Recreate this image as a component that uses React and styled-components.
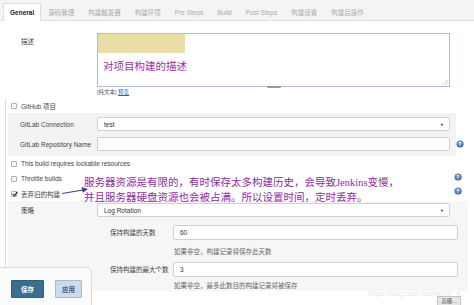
import React from 'react';
import styled, { createGlobalStyle, css } from 'styled-components';

const Global = createGlobalStyle`
  html, body { margin: 0; padding: 0; background: #fff; }
  body {
    font-family: "Liberation Sans", Arial, "Noto Sans CJK SC", sans-serif;
    font-size: 6.5px;
    color: #444;
  }
  * { box-sizing: border-box; }
`;

const Page = styled.div`
  position: relative;
  width: 474px;
  height: 305px;
  overflow: hidden;
  background: #fff;
`;

const TabBar = styled.div`
  display: flex;
  align-items: flex-end;
  height: 21px;
  padding-left: 3px;
  background: #f4f4f4;
  border-bottom: 1px solid #e0e0e0;
`;

const Tab = styled.div`
  height: 18px;
  line-height: 17px;
  padding: 0 6px;
  margin-bottom: -1px;
  white-space: nowrap;
  color: #ababab;
  border: 1px solid transparent;
  border-bottom: none;
  ${p => p.$active && css`
    background: #fff;
    color: #222;
    font-weight: bold;
    border-color: #dedede;
  `}
`;

const DescRow = styled.div`
  display: flex;
  padding: 12px 0 0 21px;
`;

const Label = styled.div`
  flex: 0 0 ${p => p.$w}px;
  line-height: 9px;
  white-space: nowrap;
  color: #444;
  ${p => p.$top && css`padding-top: 4px;`}
`;

const Control = styled.div`
  display: flex;
  flex-direction: column;
`;

const TextArea = styled.div`
  position: relative;
  width: 353px;
  height: 54px;
  border: 1px solid #a9bfdc;
  background: #fff;
`;

const Highlight = styled.div`
  width: 87px;
  height: 19px;
  background: #eadda8;
`;

const DescText = styled.div`
  margin-top: 7px;
  padding-left: 5px;
  line-height: 14px;
  font-size: 10.5px;
  color: #9b2fa0;
  font-family: "KaiTi", "Liberation Serif", "Noto Sans CJK SC", serif;
`;

const Grip = styled.div`
  position: absolute;
  left: 169px;
  bottom: -2px;
  width: 14px;
  height: 2px;
  background: #9a9a9a;
  border-radius: 1px;
`;

const Corner = styled.svg`
  position: absolute;
  right: 1px;
  bottom: 1px;
`;

const PreviewLine = styled.div`
  margin-top: 1px;
  font-size: 5.5px;
  line-height: 8px;
  color: #555;
  a { color: #2a5db0; text-decoration: underline; }
`;

const Section = styled.div`
  position: relative;
  margin: 3px 0 0 5px;
  border-left: 1px solid #dcdcdc;
  padding-bottom: 40px;
`;

const CheckRow = styled.div`
  display: flex;
  align-items: center;
  height: ${p => p.$h}px;
  padding: 0 12px 0 5px;
`;

const Box = styled.span`
  flex: 0 0 6px;
  height: 6px;
  margin-right: 4px;
  border: 1px solid #b0b0b0;
  border-radius: 1px;
  background: #f6f6f6;
  position: relative;
`;

const SubBlock = styled.div`
  margin-left: 2px;
  width: ${p => p.$w}px;
  background: ${p => p.$bg};
  padding: ${p => p.$pad};
`;

const FieldRow = styled.div`
  display: flex;
  align-items: center;
  margin-top: ${p => p.$mt || 0}px;
  padding-left: ${p => p.$pl || 0}px;
`;

const Select = styled.div`
  flex: 0 0 ${p => p.$w}px;
  height: ${p => p.$h || 14}px;
  display: flex;
  align-items: center;
  justify-content: space-between;
  padding: 0 5px 0 6px;
  background: #fff;
  border: 1px solid #d0d0d0;
  border-radius: 2px;
  color: #333;
`;

const Caret = styled.span`
  font-size: 4px;
  color: #222;
`;

const Hint = styled.div`
  margin-top: ${p => p.$mt}px;
  padding-left: 166px;
  line-height: 10px;
  color: #666;
  white-space: nowrap;
`;

const HelpIcon = styled.svg`
  flex: 0 0 8px;
  margin-left: ${p => p.$ml || 0}px;
`;

const Annotation = styled.div`
  position: absolute;
  left: 78px;
  top: 76px;
  font-family: "KaiTi", "Liberation Serif", "Noto Sans CJK SC", serif;
  font-size: 10.5px;
  line-height: 15px;
  color: #8e2c9c;
  white-space: nowrap;
  pointer-events: none;
`;

const Arrow = styled.svg`
  position: absolute;
  left: 55px;
  top: 86px;
`;

const SaveBar = styled.div`
  position: absolute;
  left: 0;
  bottom: 0;
  width: 92px;
  height: 38px;
  display: flex;
  gap: 11px;
  padding: 12px 0 0 11px;
  background: #fbfbfb;
  border-top: 1px solid #dcdcdc;
  border-right: 1px solid #dcdcdc;
  border-top-right-radius: 6px;
`;

const Button = styled.div`
  width: ${p => p.$w}px;
  height: 18px;
  display: flex;
  align-items: center;
  justify-content: center;
  font-size: 6.5px;
  font-weight: bold;
  border-radius: 1px;
  ${p => p.$primary ? css`
    background: #3c6e8d;
    color: #fff;
    border: 1px solid #2f5d7a;
  ` : css`
    background: #cbdbec;
    color: #3a5d80;
    border: 1px solid #a3bcd6;
  `}
`;

const Advanced = styled.div`
  position: absolute;
  right: 13px;
  bottom: 0;
  width: 24px;
  height: 9px;
  display: flex;
  align-items: center;
  justify-content: center;
  font-size: 5.5px;
  line-height: 7px;
  color: #444;
  background: #e6e6e6;
  border: 1px solid #c4c4c4;
  border-bottom: none;
  border-radius: 1px 1px 0 0;
`;

const Watermark = styled.div`
  position: absolute;
  right: 8px;
  bottom: 8px;
  font-size: 7px;
  color: rgba(170, 170, 170, 0.35);
  white-space: nowrap;
`;

const Help = ({ ml, dy = 0 }) => (
  <HelpIcon $ml={ml} width="8" height="8" viewBox="0 0 8 8" style={{ transform: `translateY(${dy}px)` }}>
    <defs>
      <radialGradient id="hg" cx="40%" cy="35%" r="70%">
        <stop offset="0%" stopColor="#7ea4d6" />
        <stop offset="100%" stopColor="#2f5e9e" />
      </radialGradient>
    </defs>
    <circle cx="4" cy="4" r="3.6" fill="url(#hg)" />
    <text x="4" y="6" textAnchor="middle" fontSize="5.5" fontWeight="bold" fill="#fff" fontFamily="Liberation Sans, sans-serif">?</text>
  </HelpIcon>
);

const Check = ({ checked }) => (
  <Box>
    {checked && (
      <svg width="6" height="6" viewBox="0 0 6 6" style={{ position: 'absolute', left: 0, top: -1 }}>
        <path d="M0.8 3.2 L2.4 4.8 L5.4 0.8" stroke="#222" strokeWidth="1.2" fill="none" />
      </svg>
    )}
  </Box>
);

const tabs = ['General', '源码管理', '构建触发器', '构建环境', 'Pre Steps', 'Build', 'Post Steps', '构建设置', '构建后操作'];

export default function App() {
  return (
    <Page>
      <Global />
      <TabBar>
        {tabs.map((t, i) => (
          <Tab key={t} $active={i === 0}>{t}</Tab>
        ))}
      </TabBar>

      <DescRow>
        <Label $w={76} $top>描述</Label>
        <Control>
          <TextArea>
            <Highlight />
            <DescText>对项目构建的描述</DescText>
            <Grip />
            <Corner width="6" height="6" viewBox="0 0 6 6">
              <path d="M5.5 1 L1 5.5 M5.5 3.5 L3.5 5.5" stroke="#999" strokeWidth="0.6" />
            </Corner>
          </TextArea>
          <PreviewLine>[纯文本] <a>预览</a></PreviewLine>
        </Control>
      </DescRow>

      <Section>
        <CheckRow $h={14}>
          <Check />
          <span>GitHub 项目</span>
        </CheckRow>
        <SubBlock $w={448} $bg="#f3f3f3" $pad="4px 6px 5px 12px">
          <FieldRow>
            <Label $w={77}>GitLab Connection</Label>
            <Select $w={353}>
              <span>test</span>
              <Caret>▼</Caret>
            </Select>
          </FieldRow>
          <FieldRow $mt={6}>
            <Label $w={77}>GitLab Repository Name</Label>
            <Select $w={353} />
            <Help ml={6} />
          </FieldRow>
        </SubBlock>
        <CheckRow $h={15}>
          <Check />
          <span>This build requires lockable resources</span>
        </CheckRow>
        <CheckRow $h={15}>
          <Check />
          <span>Throttle builds</span>
          <span style={{ flex: 1 }} />
          <Help dy={-2} />
        </CheckRow>
        <CheckRow $h={15}>
          <Check checked />
          <span>丢弃旧的构建</span>
          <span style={{ flex: 1 }} />
          <Help dy={-3} />
        </CheckRow>
        <SubBlock $w={460} $bg="#f6f6f6" $pad="2px 0 0 0">
          <FieldRow $pl={13}>
            <Label $w={76}>策略</Label>
            <Select $w={353}>
              <span>Log Rotation</span>
              <Caret>▼</Caret>
            </Select>
          </FieldRow>
          <FieldRow $mt={8} $pl={102}>
            <Label $w={63}>保持构建的天数</Label>
            <Select $w={285} $h={15}>60</Select>
          </FieldRow>
          <Hint $mt={7}>如果非空，构建记录将保存此天数</Hint>
          <FieldRow $mt={5} $pl={102}>
            <Label $w={63}>保持构建的最大个数</Label>
            <Select $w={285} $h={15}>3</Select>
          </FieldRow>
          <Hint $mt={4}>如果非空，最多此数目的构建记录将被保存</Hint>
        </SubBlock>

        <Arrow width="28" height="12" viewBox="0 0 28 12">
          <path d="M1 8.5 L22 5" stroke="#4a3a8c" strokeWidth="1.1" fill="none" />
          <path d="M27 4 L20.5 2 L21.8 7.8 Z" fill="#4a3a8c" />
        </Arrow>
        <Annotation>
          <div>服务器资源是有限的，有时保存太多构建历史，会导致Jenkins变慢，</div>
          <div>并且服务器硬盘资源也会被占满。所以设置时间，定时丢弃。</div>
        </Annotation>
      </Section>

      <Watermark>https://blog.csdn.net/weixin_4...</Watermark>
      <Advanced>高级...</Advanced>
      <SaveBar>
        <Button $primary $w={33}>保存</Button>
        <Button $w={27}>应用</Button>
      </SaveBar>
    </Page>
  );
}
